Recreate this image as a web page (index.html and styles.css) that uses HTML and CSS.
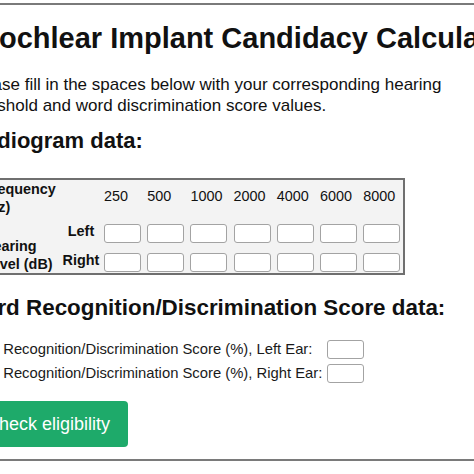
FILE: index.html
```html
<!DOCTYPE html>
<html lang="en">
<head>
    <meta charset="UTF-8">
    <meta name="viewport" content="width=device-width, initial-scale=1.0">
    <title>Cochlear Implant Candidacy Calculator</title>
    <link rel="stylesheet" href="styles.css">
</head>
<body>
    <div class="rule rule-top"></div>

    <div class="page">
        <h1 class="title">Cochlear Implant Candidacy Calculator</h1>
        <p class="intro">Please fill in the spaces below with your corresponding hearing threshold and word discrimination score values.</p>

        <h2 class="section-title">Audiogram data:</h2>
        <form class="audiogram" id="audiogramForm">
            <span class="axis-label freq-label">Frequency (Hz)</span>
            <span class="axis-label level-label">Hearing Level (dB)</span>
            <span></span>
            <span class="freq">250</span>
            <span class="freq">500</span>
            <span class="freq">1000</span>
            <span class="freq">2000</span>
            <span class="freq">4000</span>
            <span class="freq">6000</span>
            <span class="freq">8000</span>

            <span class="side">Left</span>
            <input type="text" class="level-input" id="left250">
            <input type="text" class="level-input" id="left500">
            <input type="text" class="level-input" id="left1000">
            <input type="text" class="level-input" id="left2000">
            <input type="text" class="level-input" id="left4000">
            <input type="text" class="level-input" id="left6000">
            <input type="text" class="level-input" id="left8000">

            <span class="side">Right</span>
            <input type="text" class="level-input" id="right250">
            <input type="text" class="level-input" id="right500">
            <input type="text" class="level-input" id="right1000">
            <input type="text" class="level-input" id="right2000">
            <input type="text" class="level-input" id="right4000">
            <input type="text" class="level-input" id="right6000">
            <input type="text" class="level-input" id="right8000">
        </form>

        <h2 class="section-title score-title">Word Recognition/Discrimination Score data:</h2>
        <div class="score-grid">
            <label for="scoreLeft">Word Recognition/Discrimination Score (%), Left Ear:</label>
            <input type="text" class="score-input" id="scoreLeft">
            <label for="scoreRight">Word Recognition/Discrimination Score (%), Right Ear:</label>
            <input type="text" class="score-input" id="scoreRight">
        </div>

        <button type="button" class="check-button">Check eligibility</button>
    </div>

    <div class="rule rule-bottom"></div>
</body>
</html>
```

FILE: styles.css
```css
body {
    margin: 0;
    overflow: hidden;
    background-color: #fff;
    color: #111;
    font-family: "Liberation Sans", Arial, Helvetica, sans-serif;
}

.rule {
    height: 2px;
    background-color: #7a7a7a;
}

.rule-top {
    margin-top: 3px;
}

.rule-bottom {
    margin-top: 12px;
}

/* the shot is cropped, so the page starts left of the window */
.page {
    margin-left: -32px;
}

.title {
    margin: 16px 0 0 10px;
    font-size: 29px;
    line-height: 34px;
    font-weight: bold;
    white-space: nowrap;
}

.intro {
    margin: 19px 0 0;
    width: 500px;
    font-size: 17px;
    line-height: 21px;
}

.section-title {
    margin: 12px 0 0;
    font-size: 22px;
    line-height: 26px;
    font-weight: bold;
    white-space: nowrap;
}

.score-title {
    margin: 20px 0 0 -5px;
    font-size: 22.4px;
}

.audiogram {
    display: grid;
    grid-template-columns: 79px 42px repeat(6, 43.2px) 37px;
    grid-template-rows: 44px 29px 20px;
    width: max-content;
    margin: 24px 0 0 12px;
    padding: 0 3px 0 1px;
    border: 2px solid #6f6f6f;
    background-color: #f3f3f3;
    font-size: 14.4px;
    line-height: 18px;
}

.axis-label {
    font-weight: bold;
}

.freq-label {
    grid-column: 1;
    grid-row: 1;
}

.level-label {
    grid-column: 1;
    grid-row: 2 / span 2;
    align-self: end;
}

.freq {
    padding-top: 7px;
}

.side {
    padding-right: 4px;
    font-weight: bold;
    text-align: center;
    line-height: 15px;
}

.level-input,
.score-input {
    display: block;
    width: 37px;
    height: 19px;
    margin: 0;
    padding: 0;
    box-sizing: border-box;
    border: 1px solid #a3a3a3;
    border-radius: 3px;
    background-color: #fff;
}

.score-grid {
    display: grid;
    grid-template-columns: max-content 37px;
    column-gap: 5px;
    row-gap: 5px;
    align-items: center;
    margin: 19px 0 0 -4px;
    font-size: 14.8px;
    line-height: 19px;
    color: #1a1a1a;
}

.check-button {
    display: block;
    height: 46px;
    margin-top: 18px;
    padding: 0 18px;
    border: none;
    border-radius: 4px;
    background-color: #1eaa6a;
    color: #fff;
    font-family: "Liberation Sans", Arial, Helvetica, sans-serif;
    font-size: 18px;
    cursor: pointer;
}
```
